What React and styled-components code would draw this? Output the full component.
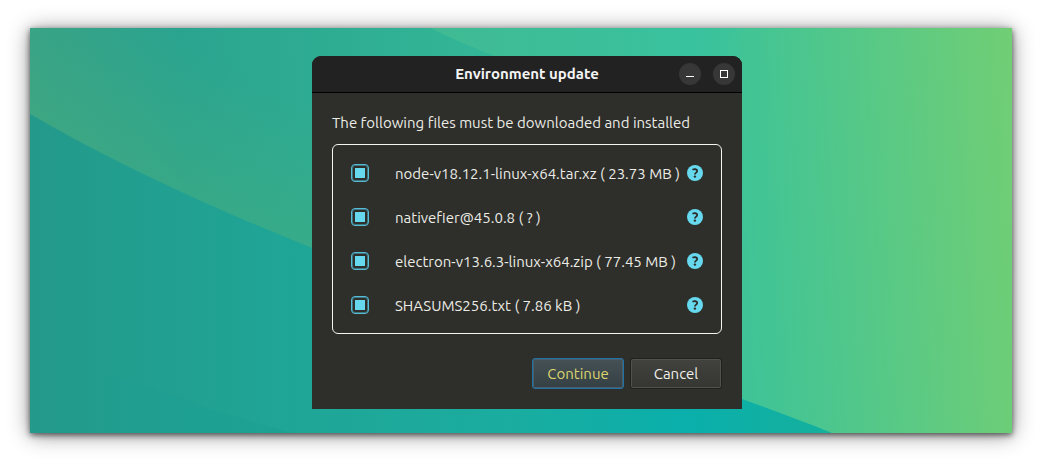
import React from "react";
import styled, { createGlobalStyle } from "styled-components";

const GlobalStyle = createGlobalStyle`
  *, *::before, *::after { box-sizing: border-box; }
  body {
    margin: 0;
    background: #ffffff;
    font-family: "Ubuntu", "Noto Sans", "Open Sans", sans-serif;
    font-size: 15px;
    line-height: 20px;
    color: #ecece6;
  }
`;

const Page = styled.main`
  padding: 28px 30px 32px;
`;

const Desktop = styled.section`
  position: relative;
  display: flex;
  justify-content: center;
  padding: 28px 0 24px 12px;
  background: #2aa793;
  box-shadow: 0 2px 6px rgba(0, 0, 0, 0.6), 0 2px 20px rgba(0, 0, 0, 0.45);
`;

const WallpaperArt = styled.svg`
  position: absolute;
  inset: 0;
  width: 100%;
  height: 100%;
`;

const Dialog = styled.section`
  position: relative;
  width: 430px;
  max-width: 100%;
  border-radius: 9px 9px 0 0;
  overflow: hidden;
  background: #2e2e2a;
`;

const TitleBar = styled.header`
  display: grid;
  grid-template-columns: 1fr auto 1fr;
  align-items: center;
  height: 37px;
  padding: 0 7px;
  background: #222222;
  border-bottom: 1px solid #000000;
`;

const Title = styled.h1`
  grid-column: 2;
  margin: 0;
  font-size: 15px;
  font-weight: 700;
  line-height: 20px;
  color: #f4f4f4;
`;

const WindowControls = styled.div`
  display: flex;
  justify-content: flex-end;
  gap: 12px;
`;

const WindowButton = styled.button`
  display: flex;
  width: 22px;
  height: 22px;
  padding: 0;
  border: 0;
  border-radius: 50%;
  background: #373737;
  color: #ffffff;
`;

const Body = styled.form`
  padding: 20px;
`;

const Message = styled.p`
  margin: 0 0 11px;
  white-space: nowrap;
`;

const FileList = styled.ul`
  margin: 0;
  padding: 6px 18px;
  list-style: none;
  border: 1px solid #f4f4f4;
  border-radius: 6px;
`;

const FileRow = styled.li`
  display: flex;
  align-items: center;
  justify-content: space-between;
  height: 44px;
`;

const FileLabel = styled.label`
  display: flex;
  align-items: center;
  gap: 26px;
  white-space: nowrap;
`;

const FileName = styled.span`
  padding-top: 2px;
`;

const CheckBox = styled.input`
  appearance: none;
  flex: none;
  display: grid;
  place-content: center;
  width: 18px;
  height: 18px;
  margin: 0;
  border: 1px solid #57bdd4;
  border-radius: 4px;
  box-shadow: inset 0 0 0 1px #3d7480;

  &:checked::before {
    content: "";
    width: 10px;
    height: 10px;
    background: #66d9ef;
  }
`;

const HelpButton = styled.button`
  flex: none;
  display: flex;
  padding: 0;
  border: 0;
  background: none;
`;

const Actions = styled.footer`
  display: flex;
  justify-content: flex-end;
  gap: 6px;
  margin-top: 24px;
`;

const ActionButton = styled.button`
  width: 92px;
  height: 31px;
  padding: 0;
  border: 1px solid ${(p) => (p.$primary ? "#2171a5" : "#20201d")};
  border-radius: 3px;
  background: ${(p) =>
    p.$primary
      ? "linear-gradient(#445155, #364044)"
      : "linear-gradient(#42423e, #353532)"};
  box-shadow: inset 0 0 0 1px ${(p) => (p.$primary ? "#49606c" : "#51514d")};
  color: ${(p) => (p.$primary ? "#dcd56f" : "#f0f0ea")};
  font: inherit;
`;

const files = [
  "node-v18.12.1-linux-x64.tar.xz ( 23.73 MB )",
  "nativefier@45.0.8 ( ? )",
  "electron-v13.6.3-linux-x64.zip ( 77.45 MB )",
  "SHASUMS256.txt ( 7.86 kB )",
];

function Wallpaper() {
  return (
    <WallpaperArt viewBox="0 0 982 405" preserveAspectRatio="none" aria-hidden="true">
      <defs>
        <linearGradient id="upper" gradientUnits="userSpaceOnUse" x1="0" y1="0" x2="975" y2="-60">
          <stop offset="0" stopColor="#36a187" />
          <stop offset="0.15" stopColor="#2ba48f" />
          <stop offset="0.3" stopColor="#2eac92" />
          <stop offset="0.67" stopColor="#39c29c" />
          <stop offset="0.73" stopColor="#42c495" />
          <stop offset="1" stopColor="#70ce75" />
        </linearGradient>
        <linearGradient id="glow" gradientUnits="userSpaceOnUse" x1="130" y1="154" x2="190" y2="36">
          <stop offset="0" stopColor="#48ae7c" stopOpacity="0.4" />
          <stop offset="1" stopColor="#48ae7c" stopOpacity="0" />
        </linearGradient>
        <linearGradient id="band" gradientUnits="userSpaceOnUse" x1="400" y1="0" x2="720" y2="0">
          <stop offset="0" stopColor="#40ba93" />
          <stop offset="0.8" stopColor="#39c29e" />
          <stop offset="1" stopColor="#39c29e" stopOpacity="0" />
        </linearGradient>
        <linearGradient id="lower" gradientUnits="userSpaceOnUse" x1="0" y1="100" x2="802" y2="100">
          <stop offset="0" stopColor="#23998a" />
          <stop offset="0.18" stopColor="#21a091" />
          <stop offset="0.35" stopColor="#1fa697" />
          <stop offset="0.6" stopColor="#1aada0" />
          <stop offset="0.82" stopColor="#0aafab" />
          <stop offset="1" stopColor="#15b09d" />
        </linearGradient>
        <linearGradient id="corner" gradientUnits="userSpaceOnUse" x1="60" y1="0" x2="262" y2="0">
          <stop offset="0" stopColor="#1d9c90" stopOpacity="0" />
          <stop offset="0.5" stopColor="#1d9f92" stopOpacity="0.8" />
          <stop offset="1" stopColor="#1da292" />
        </linearGradient>
      </defs>
      <rect width="982" height="405" fill="url(#upper)" />
      <path d="M0 0H400L470 28L712 130V371Q480 296 282 220Q130 160 0 86Z" fill="url(#glow)" />
      <path d="M400 0Q435 17 470 30L712 130V0Z" fill="url(#band)" />
      <path d="M0 86C65 124 148 166 282 220C450 286 660 348 802 405H0Z" fill="url(#lower)" />
      <path d="M60 340L100 353Q180 382 262 405H60Z" fill="url(#corner)" />
    </WallpaperArt>
  );
}

function HelpIcon() {
  return (
    <svg width="16" height="16" viewBox="0 0 16 16" aria-hidden="true">
      <circle cx="8" cy="8" r="8" fill="#66d9ef" />
      <path
        d="M5.5 4.7C6.8 4 10.2 3.8 10.2 6C10.2 7.6 7.9 7.7 7.9 9.6"
        fill="none"
        stroke="#2e2e2a"
        strokeWidth="1.8"
      />
      <circle cx="7.9" cy="11.6" r="1.2" fill="#2e2e2a" />
    </svg>
  );
}

export default function App() {
  return (
    <>
      <GlobalStyle />
      <Page>
        <Desktop>
          <Wallpaper />
          <Dialog role="dialog" aria-labelledby="dialog-title">
            <TitleBar>
              <Title id="dialog-title">Environment update</Title>
              <WindowControls>
                <WindowButton type="button" aria-label="Minimize">
                  <svg width="22" height="22" viewBox="0 0 22 22">
                    <path d="M7 13.5H15" stroke="currentColor" />
                  </svg>
                </WindowButton>
                <WindowButton type="button" aria-label="Maximize">
                  <svg width="22" height="22" viewBox="0 0 22 22">
                    <rect x="7.5" y="7.5" width="7" height="7" fill="none" stroke="currentColor" />
                  </svg>
                </WindowButton>
              </WindowControls>
            </TitleBar>
            <Body onSubmit={(e) => e.preventDefault()}>
              <Message>The following files must be downloaded and installed</Message>
              <FileList>
                {files.map((file) => (
                  <FileRow key={file}>
                    <FileLabel>
                      <CheckBox type="checkbox" defaultChecked />
                      <FileName>{file}</FileName>
                    </FileLabel>
                    <HelpButton type="button" aria-label={`About ${file}`}>
                      <HelpIcon />
                    </HelpButton>
                  </FileRow>
                ))}
              </FileList>
              <Actions>
                <ActionButton type="submit" $primary>Continue</ActionButton>
                <ActionButton type="button">Cancel</ActionButton>
              </Actions>
            </Body>
          </Dialog>
        </Desktop>
      </Page>
    </>
  );
}
